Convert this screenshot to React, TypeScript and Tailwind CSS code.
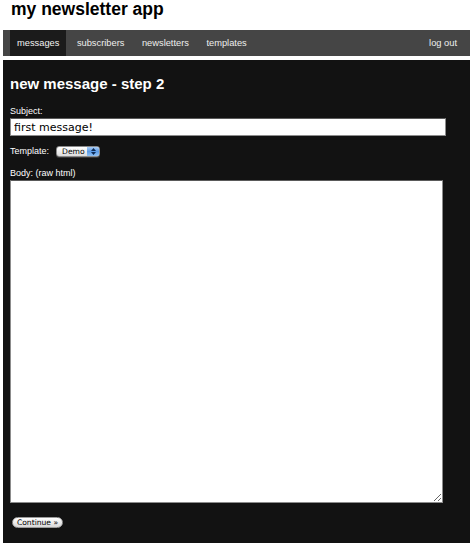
import React from "react";

const navItems = ["messages", "subscribers", "newsletters", "templates"];

function StepperSelect() {
  return (
    <div className="flex h-[11px] w-[44px] items-stretch overflow-hidden rounded-[3px] border border-[#8a8a8a] bg-gradient-to-b from-[#ffffff] to-[#dcdcdc] shadow-[0_1px_0_rgba(255,255,255,0.15)]">
      <div
        className="flex flex-1 items-center pl-[5px] text-[7.6px] leading-none text-black"
        style={{ fontFamily: '"DejaVu Sans", sans-serif' }}
      >
        Demo
      </div>
      <div className="flex w-[12px] flex-col items-center justify-center gap-[1px] bg-gradient-to-b from-[#a9cdf5] via-[#5b9be6] to-[#8fc0f2]">
        <svg width="5" height="3" viewBox="0 0 5 3">
          <path d="M0 3 L2.5 0 L5 3 Z" fill="#0d2a55" />
        </svg>
        <svg width="5" height="3" viewBox="0 0 5 3">
          <path d="M0 0 L2.5 3 L5 0 Z" fill="#0d2a55" />
        </svg>
      </div>
    </div>
  );
}

export default function App() {
  return (
    <div
      className="w-[474px] h-[547px] bg-white"
      style={{ fontFamily: '"Liberation Sans", Arial, sans-serif' }}
    >
      {/* page title */}
      <div className="h-[30px] pl-[11px]">
        <h1 className="text-[17.5px] font-bold leading-[18px] text-black">
          my newsletter app
        </h1>
      </div>

      {/* navigation bar */}
      <nav className="mx-[3px] flex h-[26px] w-[467px] items-stretch bg-[#454545] pl-[7px] pr-[13px]">
        <div className="flex gap-[3.5px]">
          {navItems.map((item, i) => (
            <a
              key={item}
              className={
                i === 0
                  ? "px-[7px] text-[9.3px] leading-[26px] text-[#f2f2f2] bg-[#1b1b1b]"
                  : "px-[7px] text-[9.3px] leading-[26px] text-[#eeeeee]"
              }
            >
              {item}
            </a>
          ))}
        </div>
        <a className="ml-auto text-[9.3px] leading-[26px] text-[#eeeeee]">log out</a>
      </nav>

      {/* form panel */}
      <main className="mx-[3px] mt-[4px] flex h-[483px] w-[467px] flex-col bg-[#121212] pl-[7px] pt-[14px] pb-[15px]">
        <h2 className="text-[15px] font-bold leading-[20px] text-white">
          new message - step 2
        </h2>

        <label className="mt-[11px] text-[9px] leading-[12px] text-white">Subject:</label>
        <input
          className="mt-[1px] h-[18px] w-[436px] border border-[#8c8c8c] border-t-[#5a5a5a] bg-white px-[3px] text-[11px] text-black outline-none"
          style={{ fontFamily: '"DejaVu Sans", sans-serif' }}
          defaultValue="first message!"
        />

        <div className="mt-[10px] flex h-[11px] items-center gap-[7px]">
          <span className="text-[9px] leading-[11px] text-white">Template:</span>
          <StepperSelect />
        </div>

        <label className="mt-[10px] text-[9px] leading-[12px] text-white">Body: (raw html)</label>
        <textarea className="mt-[1px] h-[323px] w-[433px] border border-[#8c8c8c] border-t-[#5a5a5a] bg-white outline-none" />

        <div className="mt-[14px] pl-[2px]">
          <button
            className="flex h-[11px] w-[51px] items-center justify-center rounded-full border border-[#9a9a9a] bg-gradient-to-b from-[#ffffff] to-[#d8d8d8] text-[7.6px] leading-none text-black"
            style={{ fontFamily: '"DejaVu Sans", sans-serif' }}
          >
            Continue »
          </button>
        </div>
      </main>
    </div>
  );
}
